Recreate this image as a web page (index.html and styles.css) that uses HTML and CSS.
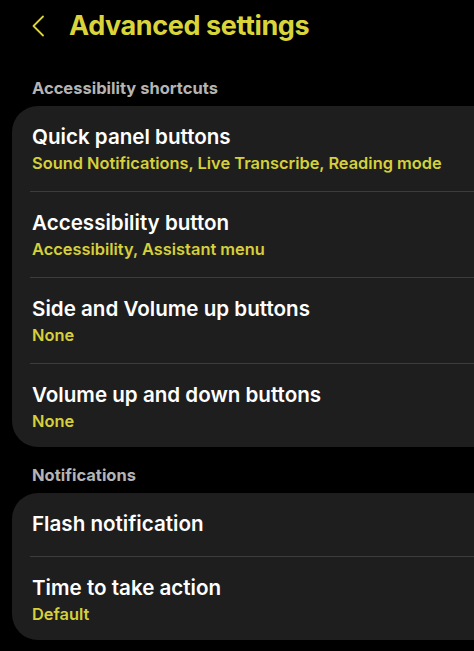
FILE: index.html
```html
<!DOCTYPE html>
<html lang="en">
<head>
<meta charset="utf-8">
<title>Advanced settings</title>
<link rel="stylesheet" href="styles.css">
</head>
<body>
<div class="screen">
  <header class="appbar">
    <svg class="back" width="14" height="22" viewBox="0 0 14 22" aria-hidden="true">
      <path d="M12 1.5 L2.5 11 L12 20.5" fill="none" stroke="#d9d43a" stroke-width="1.8" stroke-linecap="round" stroke-linejoin="round"/>
    </svg>
    <h1 class="title">Advanced settings</h1>
  </header>

  <h2 class="section">Accessibility shortcuts</h2>
  <div class="card">
    <div class="row"><div class="row-inner">
      <div class="row-title">Quick panel buttons</div>
      <div class="row-sub">Sound Notifications, Live Transcribe, Reading mode</div>
    </div></div>
    <div class="row"><div class="row-inner">
      <div class="row-title">Accessibility button</div>
      <div class="row-sub">Accessibility, Assistant menu</div>
    </div></div>
    <div class="row"><div class="row-inner">
      <div class="row-title">Side and Volume up buttons</div>
      <div class="row-sub">None</div>
    </div></div>
    <div class="row"><div class="row-inner">
      <div class="row-title">Volume up and down buttons</div>
      <div class="row-sub">None</div>
    </div></div>
  </div>

  <h2 class="section">Notifications</h2>
  <div class="card">
    <div class="row"><div class="row-inner single">
      <div class="row-title">Flash notification</div>
    </div></div>
    <div class="row"><div class="row-inner">
      <div class="row-title">Time to take action</div>
      <div class="row-sub">Default</div>
    </div></div>
  </div>
</div>
</body>
</html>
```

FILE: styles.css
```css
html, body {
  margin: 0;
  padding: 0;
  background: #000;
  overflow: hidden;
}
body {
  font-family: Inter, "Noto Sans", "Liberation Sans", sans-serif;
  color: #fff;
  width: 474px;
  height: 651px;
}
.screen {
  display: flex;
  flex-direction: column;
  overflow: hidden;
}
.appbar {
  display: flex;
  align-items: center;
  height: 52px;
  padding-left: 31px;
}
.back {
  display: block;
  margin-right: 24px;
}
.title {
  margin: 0;
  font-size: 27px;
  font-weight: 700;
  color: #d9d43a;
  line-height: 36px;
  letter-spacing: -0.4px;
}
.section {
  margin: 26px 0 8px 32px;
  font-size: 16.5px;
  font-weight: 700;
  line-height: 20px;
  color: #b4b4b4;
}
.card + .section {
  margin-top: 18px;
}
.card {
  background: #1e1e1e;
  margin-left: 12px;
  margin-right: -30px;
  border-radius: 26px;
}
.row {
  padding-left: 18px;
}
.row-inner {
  padding: 18px 0 15px 2px;
}
.row:last-child .row-inner {
  padding-bottom: 13px;
}
.row + .row .row-inner {
  border-top: 1px solid #3c3c3c;
}
.row-inner.single {
  padding-bottom: 19px;
}
.row-title {
  font-size: 20.6px;
  font-weight: 600;
  line-height: 26px;
  color: #fff;
}
.row-sub {
  font-size: 16.4px;
  font-weight: 600;
  line-height: 26px;
  color: #d6d03a;
}
```
